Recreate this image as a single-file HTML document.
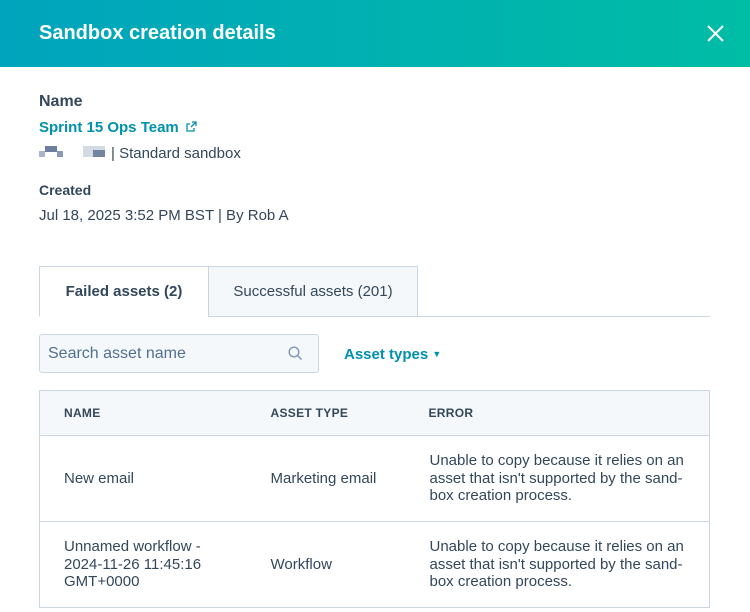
<!DOCTYPE html>
<html><head><style>
*{margin:0;padding:0;box-sizing:border-box}
body{width:750px;height:612px;overflow:hidden;background:#fff;font-family:"Liberation Sans",sans-serif;color:#33475b;position:relative}
.hdr{position:absolute;left:0;top:0;width:750px;height:67px;background:linear-gradient(90deg,#00a4bd,#00bda5)}
.hdr h1{position:absolute;left:39px;top:22px;font-size:20px;color:#fff;font-weight:bold}
.abs{position:absolute;white-space:nowrap}
.b{font-weight:bold}
.tab{position:absolute;top:266px;height:51px;border:1px solid #cbd6e2;font-size:15px;display:flex;align-items:center;justify-content:center}
table{position:absolute;left:39px;top:390px;width:671px;border-collapse:collapse;font-size:15px;border:1px solid #cbd6e2}
td,th{border-top:1px solid #cbd6e2;border-bottom:1px solid #cbd6e2;text-align:left;padding:0 24px;vertical-align:middle;line-height:18px}
th{background:#f5f8fa;height:45px;font-size:12px;font-weight:bold;letter-spacing:.3px}
</style></head><body>
<div class="hdr"><h1>Sandbox creation details</h1>
<svg style="position:absolute;left:707px;top:25px" width="17" height="17" viewBox="0 0 17 17"><path d="M1 1L16 16M16 1L1 16" stroke="#fff" stroke-width="2"/></svg></div>
<div class="abs b" style="left:39px;top:93px;font-size:16px">Name</div>
<div class="abs b" style="left:39px;top:119px;font-size:15px;color:#0091ae">Sprint 15 Ops Team
<svg width="11" height="11" viewBox="0 0 11 11" style="margin-left:3px"><path d="M6 1h4v4M10 1L5 6M8 7v3H1V3h3" fill="none" stroke="#0091ae" stroke-width="1.3"/></svg></div>
<div class="abs" style="left:39px;top:151px;width:6px;height:6px;background:#a9b5c8"></div>
<div class="abs" style="left:45px;top:146px;width:12px;height:6px;background:#6d7fa0"></div>
<div class="abs" style="left:57px;top:151px;width:6px;height:6px;background:#8a9bb5"></div>
<div class="abs" style="left:83px;top:146px;width:22px;height:11px;background:#d3dae4"></div>
<div class="abs" style="left:93px;top:150px;width:12px;height:7px;background:#7384a3"></div>
<div class="abs" style="left:111px;top:145px;font-size:15px">| Standard sandbox</div>
<div class="abs b" style="left:39px;top:182px;font-size:14px">Created</div>
<div class="abs" style="left:39px;top:207px;font-size:15px">Jul 18, 2025 3:52 PM BST | By Rob A</div>
<div class="abs" style="left:39px;top:316px;width:671px;height:1px;background:#cbd6e2"></div>
<div class="tab b" style="left:39px;width:170px;background:#fff;border-bottom-color:#fff">Failed assets (2)</div>
<div class="tab" style="left:208px;width:210px;background:#f5f8fa">Successful assets (201)</div>
<div class="abs" style="left:39px;top:334px;width:280px;height:39px;border:1px solid #cbd6e2;border-radius:3px;background:#f5f8fa"></div>
<div class="abs" style="left:48px;top:345px;font-size:16px;color:#516f90">Search asset name</div>
<svg class="abs" style="left:288px;top:346px" width="15" height="15" viewBox="0 0 15 15"><circle cx="6" cy="6" r="4.8" fill="none" stroke="#7c98b6" stroke-width="1.4"/><path d="M9.5 9.5L13.5 13.5" stroke="#7c98b6" stroke-width="1.5"/></svg>
<div class="abs b" style="left:344px;top:346px;font-size:15px;color:#0091ae">Asset types <span style="font-size:9px;vertical-align:2px">▼</span></div>
<table>
<tr><th style="width:207px">NAME</th><th style="width:158px">ASSET TYPE</th><th>ERROR</th></tr>
<tr style="height:86px"><td>New email</td><td>Marketing email</td><td style="padding-left:25px;padding-right:20px;line-height:17.5px">Unable to copy because it relies on an asset that isn't supported by the sand-box creation process.</td></tr>
<tr style="height:86px"><td style="line-height:17.5px">Unnamed workflow - 2024-11-26 11:45:16 GMT+0000</td><td>Workflow</td><td style="padding-left:25px;padding-right:20px;line-height:17.5px">Unable to copy because it relies on an asset that isn't supported by the sand-box creation process.</td></tr>
</table>
</body></html>
